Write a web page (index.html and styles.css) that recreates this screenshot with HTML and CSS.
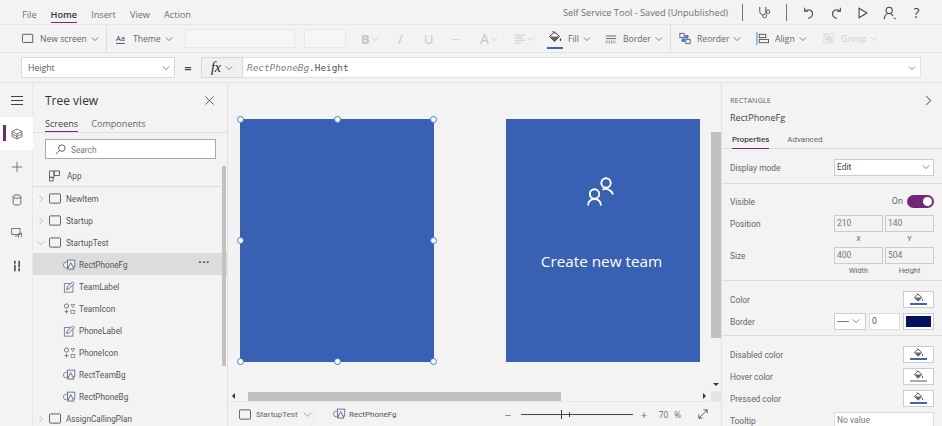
FILE: index.html
```html
<!DOCTYPE html>
<html lang="en">
<head>
<meta charset="utf-8">
<title>Self Service Tool</title>
<link rel="stylesheet" href="styles.css">
</head>
<body>
<svg class="defs" width="0" height="0" aria-hidden="true">
  <defs>
    <symbol id="chev" viewBox="0 0 10 10"><path d="M1 3l4 4 4-4" fill="none" stroke="currentColor" stroke-width="1"/></symbol>
    <symbol id="chevr" viewBox="0 0 10 10"><path d="M3 1l4 4-4 4" fill="none" stroke="currentColor" stroke-width="1"/></symbol>
    <symbol id="screen" viewBox="0 0 13 11"><rect x=".5" y=".5" width="12" height="10" rx="1" fill="none" stroke="#555" stroke-width="1"/></symbol>
    <symbol id="rect" viewBox="0 0 16 14"><circle cx="4" cy="7" r="3.500" fill="#f3f3f3" stroke="#777"/><rect x="5.500" y="1" width="9" height="8.500" fill="#f3f3f3" stroke="#3a66b5"/><path d="M9.500 4l4 8h-8z" fill="#f3f3f3" stroke="#555"/></symbol>
    <symbol id="label" viewBox="0 0 14 14"><rect x="1" y="3" width="10" height="10" fill="none" stroke="#777"/><path d="M3.500 10l1-3 6-6 2 2-6 6z" fill="#f3f3f3" stroke="#3a66b5"/></symbol>
    <symbol id="icons" viewBox="0 0 16 16"><circle cx="4" cy="4" r="2.800" fill="none" stroke="#555"/><path d="M10 2h5l-2.500 4z" fill="none" stroke="#777"/><path d="M4 9v5M1.500 11.500h5" stroke="#555" fill="none"/><rect x="10" y="10" width="5" height="4" fill="none" stroke="#777"/></symbol>
    <symbol id="bucket" viewBox="0 0 14 12"><path d="M6.500 1.500l5 4.500-5 5-5-5z" fill="#fff" stroke="#333"/><path d="M1.500 6h10l-5 5z" fill="#666"/><path d="M4.500 .5l2.500 2.500" stroke="#333"/><path d="M12.500 7.500c1 1.500 1 3 0 3s-1-1.500 0-3z" fill="#333"/></symbol>
  </defs>
</svg>
<div class="app">
  <header class="tabs">
    <nav class="tablist">
      <span class="tab">File</span>
      <span class="tab tab-on">Home</span>
      <span class="tab">Insert</span>
      <span class="tab">View</span>
      <span class="tab">Action</span>
    </nav>
    <div class="titlebar">
      <span class="doc">Self Service Tool - Saved (Unpublished)</span>
      <i class="vsep vsep-a"></i>
      <svg class="tico steth" viewBox="0 0 16 16"><path d="M2 1v5c0 3 2 4 3.500 4S9 9 9 6V1M5.500 10v2c0 2 4 2 4 0V9" fill="none" stroke="currentColor"/><circle cx="11.500" cy="6.500" r="2" fill="none" stroke="currentColor"/></svg>
      <i class="vsep vsep-b"></i>
      <svg class="tico undo" viewBox="0 0 16 16"><path d="M3 2v4h4M3 6c3-3 9-2 9 3 0 3-3 5-5 5" fill="none" stroke="currentColor" stroke-width="1.200"/></svg>
      <svg class="tico redo" viewBox="0 0 16 16"><path d="M13 2v4H9M13 6c-3-3-9-2-9 3 0 3 3 5 5 5" fill="none" stroke="currentColor" stroke-width="1.200"/></svg>
      <svg class="tico play" viewBox="0 0 16 16"><path d="M3.500 2.500l9 5.500-9 5.500z" fill="none" stroke="currentColor" stroke-width="1.200"/></svg>
      <svg class="tico user" viewBox="0 0 16 16"><circle cx="7" cy="5" r="3.500" fill="none" stroke="currentColor" stroke-width="1.200"/><path d="M1.500 15c0-4 2.500-6.500 5.500-6.500 2 0 3.500 1 4.500 3M12.500 13.500l2 1.500" fill="none" stroke="currentColor" stroke-width="1.200"/></svg>
      <span class="help">?</span>
    </div>
  </header>

  <div class="toolbar">
    <div class="tool tool-new">
      <svg class="tbi" viewBox="0 0 14 12"><rect x=".5" y=".5" width="12" height="9.500" rx="1" fill="none" stroke="#444"/><path d="M10 10h3" stroke="#3a66b5"/></svg>
      <span>New screen</span><svg class="cv"><use href="#chev"/></svg>
    </div>
    <i class="tsep"></i>
    <div class="tool tool-theme">
      <span class="aa">Aa</span><span>Theme</span><svg class="cv"><use href="#chev"/></svg>
    </div>
    <div class="ghost ghost-font"></div>
    <div class="ghost ghost-size"></div>
    <div class="dis dis-b">B<svg class="cv"><use href="#chev"/></svg></div>
    <div class="dis dis-i">/</div>
    <div class="dis dis-u">U</div>
    <div class="dis dis-s">&#8212;</div>
    <div class="dis dis-a">A<svg class="cv"><use href="#chev"/></svg></div>
    <div class="dis dis-al">
      <svg class="tbi" viewBox="0 0 14 12"><path d="M1 1.500h12M1 4.500h9M1 7.500h12M1 10.500h7" stroke="#c4c4c4"/></svg>
      <svg class="cv"><use href="#chev"/></svg>
    </div>
    <div class="tool tool-fill">
      <span class="fillbox"><svg class="fillicon"><use href="#bucket"/></svg><i class="fillbar"></i></span>
      <span>Fill</span><svg class="cv"><use href="#chev"/></svg>
    </div>
    <div class="tool tool-border">
      <svg class="tbi" viewBox="0 0 14 12"><path d="M1 2.500h12M1 5.500h12" stroke="#555"/><path d="M1 8.500h12M1 10.500h12" stroke="#555" stroke-dasharray="1 1"/></svg>
      <span>Border</span><svg class="cv"><use href="#chev"/></svg>
    </div>
    <i class="tsep"></i>
    <div class="tool tool-reorder">
      <svg class="tbi" viewBox="0 0 14 14"><rect x="1" y="1" width="5" height="5" fill="none" stroke="#555"/><rect x="7" y="3" width="4" height="4" fill="#3a7fd5"/><rect x="8" y="8" width="5" height="5" fill="none" stroke="#555"/><rect x="3" y="7" width="4" height="4" fill="#3a7fd5"/></svg>
      <span>Reorder</span><svg class="cv"><use href="#chev"/></svg>
    </div>
    <div class="tool tool-align">
      <svg class="tbi" viewBox="0 0 14 14"><path d="M1 0v14" stroke="#3a7fd5"/><rect x="3.500" y="2.500" width="7" height="3.500" fill="none" stroke="#555"/><rect x="3.500" y="8" width="10" height="3.500" fill="none" stroke="#555"/></svg>
      <span>Align</span><svg class="cv"><use href="#chev"/></svg>
    </div>
    <div class="tool tool-group">
      <svg class="tbi" viewBox="0 0 14 14"><rect x="1" y="1" width="12" height="12" fill="none" stroke="#ccc" stroke-dasharray="2 1"/><rect x="3.500" y="3.500" width="5" height="5" fill="none" stroke="#ccc"/><rect x="6" y="6" width="5" height="5" fill="none" stroke="#ccc"/></svg>
      <span>Group</span><svg class="cv"><use href="#chev"/></svg>
    </div>
  </div>

  <div class="formula">
    <div class="prop">Height<svg class="cv"><use href="#chev"/></svg></div>
    <span class="eq">=</span>
    <div class="fx"><em>fx</em><svg class="cv"><use href="#chev"/></svg></div>
    <div class="fxinput"><code><em>RectPhoneBg</em>.Height</code><svg class="cv"><use href="#chev"/></svg></div>
  </div>

  <main class="main">
    <aside class="rail">
      <svg class="rico burger" viewBox="0 0 12 9"><path d="M0 .5h12M0 4.500h12M0 8.500h12" stroke="#444"/></svg>
      <div class="rail-on">
        <svg class="rico" viewBox="0 0 12 12"><path d="M6 1l5 2.500v5L6 11 1 8.500v-5zM1 3.500L6 6l5-2.500M6 6v5M1 6l5 2.500L11 6" fill="none" stroke="#555" stroke-width=".8"/></svg>
      </div>
      <svg class="rico" viewBox="0 0 16 16"><path d="M8 1v14M1 8h14" stroke="#555"/></svg>
      <svg class="rico" viewBox="0 0 12 14"><ellipse cx="6" cy="3" rx="4.500" ry="2" fill="none" stroke="#555"/><path d="M1.500 3v8c0 2.500 9 2.500 9 0V3" fill="none" stroke="#555"/></svg>
      <svg class="rico" viewBox="0 0 16 14"><rect x="1" y="1" width="11" height="8" fill="none" stroke="#555"/><path d="M5 11h4M10 13V8l4-1v5" fill="none" stroke="#555"/></svg>
      <svg class="rico" viewBox="0 0 10 14"><path d="M2.500 1v12M7.500 1v12" stroke="#555" stroke-width="2"/><path d="M1 5h3M6 9h3" stroke="#f3f3f3"/></svg>
    </aside>

    <section class="tree">
      <div class="tree-head"><h2>Tree view</h2><svg class="close" viewBox="0 0 10 10"><path d="M.5.5l9 9M9.500.5l-9 9" stroke="#555"/></svg></div>
      <div class="tree-tabs"><span class="ttab ttab-on">Screens</span><span class="ttab">Components</span></div>
      <div class="search">
        <svg class="sico" viewBox="0 0 12 12"><circle cx="7.500" cy="4.500" r="3.500" fill="none" stroke="#555"/><path d="M5 7l-4 4" stroke="#555"/></svg>
        <span>Search</span>
      </div>
      <div class="tree-body">
        <div class="tree-list">
          <div class="row row-app"><svg class="ri ri-app" viewBox="0 0 12 12"><path d="M.5.500h5v7h-5zM5.500.500h6v5h-6zM.5 7.500h4v4h-4z" fill="none" stroke="#555"/></svg>App</div>
          <div class="row"><svg class="tw"><use href="#chevr"/></svg><svg class="ri"><use href="#screen"/></svg>NewItem</div>
          <div class="row"><svg class="tw"><use href="#chevr"/></svg><svg class="ri"><use href="#screen"/></svg>Startup</div>
          <div class="row"><svg class="tw"><use href="#chev"/></svg><svg class="ri"><use href="#screen"/></svg>StartupTest</div>
          <div class="row row-child row-sel"><svg class="ci"><use href="#rect"/></svg>RectPhoneFg<span class="dots">&#183;&#183;&#183;</span></div>
          <div class="row row-child"><svg class="ci"><use href="#label"/></svg>TeamLabel</div>
          <div class="row row-child"><svg class="ci"><use href="#icons"/></svg>TeamIcon</div>
          <div class="row row-child"><svg class="ci"><use href="#label"/></svg>PhoneLabel</div>
          <div class="row row-child"><svg class="ci"><use href="#icons"/></svg>PhoneIcon</div>
          <div class="row row-child"><svg class="ci"><use href="#rect"/></svg>RectTeamBg</div>
          <div class="row row-child"><svg class="ci"><use href="#rect"/></svg>RectPhoneBg</div>
          <div class="row"><svg class="tw"><use href="#chevr"/></svg><svg class="ri"><use href="#screen"/></svg>AssignCallingPlan</div>
        </div>
        <div class="tree-scroll"><i></i></div>
      </div>
    </section>

    <section class="work">
      <div class="canvas-wrap">
        <div class="canvas">
          <div class="phone phone-a">
            <i class="h tl"></i><i class="h tc"></i><i class="h tr"></i>
            <i class="h ml"></i><i class="h mr"></i>
            <i class="h bl"></i><i class="h bc"></i><i class="h br"></i>
          </div>
          <div class="phone phone-b">
            <svg class="team" viewBox="0 0 27 30"><g fill="none" stroke="#fff" stroke-width="1.900"><circle cx="19" cy="6" r="4.700"/><path d="M15.500 12.500c4-1.500 9 0 10.500 5"/><circle cx="7.500" cy="17" r="4.700"/><path d="M1 28.500c0-4 3-6.500 6.500-6.500s6.500 2.500 6.500 6.500"/></g></svg>
            <span class="create">Create new team</span>
          </div>
        </div>
        <div class="vscroll"><i class="up"></i><b></b><i class="down"></i></div>
      </div>
      <div class="hscroll"><i class="left"></i><span class="htrack"><b></b></span><i class="right"></i><i class="corner"></i></div>
      <footer class="status">
        <div class="crumb crumb-a"><svg class="ri"><use href="#screen"/></svg>StartupTest<svg class="cv"><use href="#chev"/></svg></div>
        <div class="crumb crumb-b"><svg class="ci"><use href="#rect"/></svg>RectPhoneFg</div>
        <div class="zoom">
          <span class="zm">&#8722;</span>
          <span class="slider"><i class="knob"></i><i class="tick"></i></span>
          <span class="zm">+</span>
          <span class="pct">70</span><span class="pct">%</span>
          <svg class="expand" viewBox="0 0 12 12"><path d="M1 11L11 1M6.500 1H11v4.500M1 6.500V11h4.500" fill="none" stroke="#444"/></svg>
        </div>
      </footer>
    </section>

    <aside class="props">
      <div class="p-head">
        <div class="p-kind"><span>RECTANGLE</span><svg class="p-next"><use href="#chevr"/></svg></div>
        <div class="p-name">RectPhoneFg</div>
        <div class="p-tabs"><span class="ptab ptab-on">Properties</span><span class="ptab">Advanced</span></div>
      </div>
      <div class="p-sec p-sec-a">
        <div class="p-row"><label>Display mode</label><div class="p-select">Edit<svg class="cv"><use href="#chev"/></svg></div></div>
      </div>
      <div class="p-sec p-sec-b">
        <div class="p-row p-vis"><label>Visible</label><div class="toggle-wrap"><span>On</span><span class="toggle"><i></i></span></div></div>
        <div class="p-row p-pair"><label>Position</label><div class="pair"><span class="num">210</span><span class="num">140</span></div></div>
        <div class="caps"><span>X</span><span>Y</span></div>
        <div class="p-row p-pair"><label>Size</label><div class="pair"><span class="num">400</span><span class="num">504</span></div></div>
        <div class="caps"><span>Width</span><span>Height</span></div>
      </div>
      <div class="p-sec p-sec-c">
        <div class="p-row"><label>Color</label><span class="swatch"><svg><use href="#bucket"/></svg><i></i></span></div>
        <div class="p-row"><label>Border</label>
          <div class="border-tools">
            <span class="bstyle"><i></i><svg class="cv"><use href="#chev"/></svg></span>
            <span class="bwidth">0</span>
            <span class="bcolor"><i></i></span>
          </div>
        </div>
      </div>
      <div class="p-sec p-sec-d">
        <div class="p-row"><label>Disabled color</label><span class="swatch"><svg><use href="#bucket"/></svg><i></i></span></div>
        <div class="p-row"><label>Hover color</label><span class="swatch swatch-grey"><svg><use href="#bucket"/></svg><i></i></span></div>
        <div class="p-row"><label>Pressed color</label><span class="swatch"><svg><use href="#bucket"/></svg><i></i></span></div>
        <div class="p-row"><label>Tooltip</label><div class="p-input">No value</div></div>
      </div>
    </aside>
  </main>
</div>
</body>
</html>
```
FILE: styles.css
```css
* { box-sizing: border-box; }
html, body { margin: 0; height: 100%; overflow: hidden; }
body { font-family: "Open Sans", "Noto Sans", sans-serif; font-size: 9px; color: #605e5c; background: #f3f3f3; }
.defs { position: absolute; }
.app { width: 942px; height: 426px; display: flex; flex-direction: column; overflow: hidden; }
i { display: block; }
.cv { width: 8px; height: 8px; color: #666; flex: none; margin-left: 4px; }

/* tabs */
.tabs { height: 25px; flex: none; display: flex; justify-content: space-between; border-bottom: 1px solid #e6e6e6; }
.tablist { display: flex; gap: 14px; padding-left: 22px; font-size: 9.200px; }
.tab { height: 24px; line-height: 29px; color: #707070; }
.tab-on { color: #333; font-weight: 600; border-bottom: 1px solid #742774; line-height: 29px; height: 23px; }
.titlebar { display: flex; align-items: center; height: 25px; padding-right: 21px; color: #444; }
.doc { font-size: 9.200px; color: #707070; margin-right: 14px; }
.vsep { width: 1px; height: 17px; background: #777; flex: none; }
.vsep-a { margin-right: 15px; }
.vsep-b { margin: 0 15px 0 14px; }
.tico { width: 14px; height: 14px; flex: none; }
.undo, .redo, .play { margin-right: 13px; }
.user { margin-right: 15px; }
.help { font-size: 14px; color: #444; width: 9px; text-align: center; }

/* toolbar */
.toolbar { height: 28px; flex: none; display: flex; align-items: center; padding-left: 22px; border-bottom: 1px solid #e2e2e2; }
.tool { display: flex; align-items: center; font-size: 8.600px; color: #666; flex: none; }
.tbi { width: 12px; height: 12px; flex: none; margin-right: 6px; }
.tool-new { width: 84px; }
.tsep { width: 1px; height: 28px; background: #dedede; flex: none; }
.tool-theme { margin-left: 9px; width: 69px; }
.aa { font-size: 7.500px; color: #333; border-bottom: 1px solid #3a66b5; line-height: 9px; margin-right: 8px; width: 9px; }
.ghost { height: 19px; border: 1px solid #e8e8e8; background: #f6f6f6; flex: none; }
.ghost-font { width: 110px; }
.ghost-size { width: 42px; margin-left: 9px; }
.dis { display: flex; align-items: center; color: #c6c6c6; font-size: 13px; flex: none; }
.dis .cv { color: #ccc; margin-left: 1px; }
.dis .tbi { margin: 0; }
.dis-b { margin-left: 15px; font-weight: 700; width: 37px; }
.dis-i { width: 26px; }
.dis-u { width: 27px; }
.dis-s { width: 29px; font-size: 9px; }
.dis-a { width: 34px; font-size: 14px; }
.dis-al { width: 33px; }
.tool-fill { width: 58px; }
.fillbox { width: 16px; height: 20px; margin-right: 5px; display: flex; flex-direction: column; align-items: center; justify-content: space-between; }
.fillicon { width: 14px; height: 13px; margin-top: 1px; }
.fillbar { width: 16px; height: 2px; background: #3a66b5; }
.tool-border { width: 65px; }
.tool-reorder { margin-left: 8px; width: 77px; }
.tool-reorder .tbi { height: 13px; }
.tool-align { width: 67px; }
.tool-align .tbi { margin-right: 6px; width: 13px; height: 13px; }
.tool-group { color: #cfcfcf; }
.tool-group .tbi { width: 11px; height: 11px; margin-right: 7px; }
.tool-group .cv { color: #ccc; }

/* formula */
.formula { height: 30px; flex: none; display: flex; align-items: center; padding-left: 21px; border-bottom: 1px solid #e2e2e2; }
.prop { width: 154px; height: 21px; background: #fff; border: 1px solid #d9d9d9; display: flex; align-items: center; justify-content: space-between; padding: 0 4px 0 6px; color: #555; font-size: 8.700px; }
.eq { width: 26px; text-align: center; font-size: 13px; font-weight: 600; color: #444; }
.fx { width: 42px; height: 21px; border: 1px solid #d9d9d9; background: #f0f0f0; display: flex; align-items: center; justify-content: center; }
.fx em { font-family: "Liberation Serif", serif; font-size: 14px; color: #222; }
.fxinput { width: 678px; height: 21px; background: #fff; border: 1px solid #e2e2e2; border-left: 0; display: flex; align-items: center; justify-content: space-between; padding: 0 4px; }
.fxinput code { font-family: "DejaVu Sans Mono", "Liberation Mono", monospace; font-size: 9.400px; color: #555; }
.fxinput em { color: #808080; }

/* main */
.main { flex: 1; display: flex; min-height: 0; }
.rail { width: 33px; flex: none; display: flex; flex-direction: column; align-items: center; border-right: 1px solid #e6e6e6; padding: 1px 0 0 2px; }
.rico { width: 12px; height: 12px; flex: none; margin: 10.500px 0; }
.burger { height: 9px; margin: 12px 0; }
.rail-on { width: 33px; height: 33px; background: #fff; display: flex; align-items: center; justify-content: center; border-left: 3px solid transparent; padding-right: 2px; position: relative; flex: none; align-self: flex-start; margin-left: -2px; }
.rail-on::before { content: ""; position: absolute; left: 0; top: 8px; width: 3px; height: 16px; background: #742774; }

/* tree */
.tree { width: 195px; flex: none; display: flex; flex-direction: column; border-right: 1px solid #e2e2e2; }
.tree-head { height: 34px; display: flex; align-items: center; justify-content: space-between; padding: 0 13px 0 12px; flex: none; }
.tree-head h2 { margin: 0; font-size: 12px; font-weight: 400; color: #333; }
.close { width: 9px; height: 9px; }
.tree-tabs { height: 15px; display: flex; gap: 13px; padding-left: 12px; border-bottom: 1px solid #e0e0e0; font-size: 9.100px; flex: none; box-sizing: content-box; }
.ttab { color: #666; height: 15px; line-height: 13px; }
.ttab-on { color: #444; border-bottom: 1px solid #742774; }
.search { margin: 6px 12px; height: 20px; width: 171px; background: #fff; border: 1px solid #aaa; display: flex; align-items: center; padding: 1px 0 0 9px; gap: 5px; flex: none; font-family: Roboto, sans-serif; font-size: 8.300px; color: #777; }
.sico { width: 11px; height: 11px; }
.tree-body { flex: 1; display: flex; min-height: 0; overflow: hidden; }
.tree-list { flex: 1; min-width: 0; }
.row { height: 22px; display: flex; align-items: center; padding: 1px 0 0 4px; font-family: Roboto, sans-serif; font-size: 8.200px; color: #555; white-space: nowrap; }
.row-app { padding: 1px 0 0 16px; border-bottom: 1px solid #ddd; }
.tw { width: 8px; height: 8px; color: #aaa; flex: none; margin-right: 4px; }
.ri { width: 12px; height: 11px; flex: none; margin-right: 5px; }
.ri-app { width: 11px; height: 12px; margin-right: 7px; }
.row-child { padding-left: 30px; position: relative; }
.ci { width: 13px; height: 12px; flex: none; margin-right: 3px; }
.row-sel { background: #dcdcdc; margin-right: -6px; }
.dots { position: absolute; left: 165px; top: 2px; font-size: 13px; line-height: 14px; font-weight: 700; color: #555; }
.tree-scroll { width: 6px; flex: none; position: relative; }
.tree-scroll i { position: absolute; top: 1px; width: 4px; height: 200px; background: #c2c2c2; left: 1px; }

/* work area */
.work { flex: 1; min-width: 0; display: flex; flex-direction: column; border-right: 1px solid #e2e2e2; }
.canvas-wrap { flex: 1; display: flex; min-height: 0; }
.canvas { flex: 1; position: relative; }
.phone { position: absolute; top: 36px; width: 194px; height: 243px; background: #3861b3; }
.phone-a { left: 12px; }
.phone-b { left: 278px; display: flex; flex-direction: column; align-items: center; }
.h { position: absolute; width: 7px; height: 7px; border-radius: 50%; background: #fff; border: 1px solid #3a7fd5; }
.tl { left: -3px; top: -3px; } .tc { left: 94px; top: -3px; } .tr { right: -3px; top: -3px; }
.ml { left: -3px; top: 118px; } .mr { right: -3px; top: 118px; }
.bl { left: -3px; bottom: -3px; } .bc { left: 94px; bottom: -3px; } .br { right: -3px; bottom: -3px; }
.team { width: 27px; height: 30px; margin: 58px 5px 0 0; flex: none; }
.create { margin: 44px 3px 0 0; color: #fff; font-size: 15.300px; line-height: 20px; }
.vscroll { width: 10px; flex: none; display: flex; flex-direction: column; padding-top: 49px; padding-bottom: 2px; }
.vscroll b { display: block; height: 206px; background: #c0c0c0; }
.vscroll .up { display: none; }
.vscroll .down { width: 0; height: 0; border: 3px solid transparent; border-top: 3px solid #333; margin: auto auto 0; }
.hscroll { height: 10px; flex: none; display: flex; align-items: center; padding: 0 0 0 1px; }
.hscroll .left { width: 6px; height: 6px; border: 3px solid transparent; border-right: 3px solid #333; flex: none; }
.hscroll .right { width: 6px; height: 6px; border: 3px solid transparent; border-left: 3px solid #333; flex: none; margin-right: 2px; }
.hscroll .corner { width: 10px; height: 10px; background: #e4e4e4; flex: none; }
.htrack { flex: 1; height: 9px; padding-left: 13px; }
.htrack b { display: block; width: 313px; height: 9px; background: #c0c0c0; }
.status { height: 25px; flex: none; display: flex; align-items: center; border-top: 1px solid #e8e8e8; }
.crumb { display: flex; align-items: center; font-family: Roboto, sans-serif; font-size: 8px; color: #666; position: relative; }
.crumb-a { padding-left: 11px; width: 105px; height: 24px; }
.crumb-a .cv { margin-left: 5px; color: #999; width: 9px; height: 9px; }
.crumb-a::after { content: ""; position: absolute; right: 13px; top: 3px; width: 17px; height: 17px; border-top: 1px solid #e2e2e2; border-right: 1px solid #e2e2e2; transform: scaleX(.35) rotate(45deg); }
.crumb-b { color: #555; }
.zoom { display: flex; align-items: center; margin-left: auto; padding-right: 13px; color: #666; }
.zm { font-size: 11px; width: 12px; text-align: center; }
.slider { width: 112px; height: 1px; background: #444; position: relative; margin: 0 5px 0 7px; }
.knob { position: absolute; left: 40px; top: -4px; width: 1px; height: 9px; background: #333; }
.tick { position: absolute; left: 48px; top: -2px; width: 1px; height: 5px; background: #444; }
.pct { font-size: 8.200px; margin-left: 9px; }
.pct + .pct { margin-left: 6px; }
.expand { width: 10px; height: 10px; margin-left: 17px; }

/* props */
.props { width: 220px; flex: none; display: flex; flex-direction: column; overflow: hidden; }
.p-head { height: 66px; padding: 11px 8px 0 8px; border-bottom: 1px solid #ddd; flex: none; }
.p-kind { display: flex; justify-content: space-between; align-items: center; font-size: 7.400px; color: #666; height: 12px; }
.p-next { width: 11px; height: 11px; color: #777; }
.p-name { font-size: 9.100px; color: #444; margin-top: 5px; line-height: 13px; }
.p-tabs { display: flex; gap: 18px; font-family: Roboto, sans-serif; font-size: 8px; margin-top: 10px; padding-left: 2px; }
.ptab { color: #666; height: 15px; line-height: 11px; }
.ptab-on { color: #444; font-weight: 500; border-bottom: 1px solid #742774; height: 15px; }
.p-sec { padding: 0 8px; border-bottom: 1px solid #ddd; flex: none; display: flex; flex-direction: column; }
.p-row { display: flex; align-items: center; justify-content: space-between; font-family: Roboto, sans-serif; font-size: 8.400px; color: #666; flex: none; height: 22px; }
.p-row label { padding-top: 1px; }
.p-sec-a { height: 35px; justify-content: center; padding-top: 2px; }
.p-select { width: 100px; height: 17px; background: #fff; border: 1px solid #ccc; display: flex; align-items: center; justify-content: space-between; padding: 0 3px 0 2px; color: #444; font-size: 8.400px; }
.p-sec-b { height: 97px; padding-top: 6px; }
.p-vis { height: 22px; margin-bottom: 1px; }
.toggle-wrap { display: flex; align-items: center; gap: 4px; font-size: 9px; }
.toggle { width: 27px; height: 13px; border-radius: 7px; background: #742774; position: relative; }
.toggle i { position: absolute; right: 2px; top: 2px; width: 9px; height: 9px; background: #fff; border-radius: 50%; }
.p-pair { height: 17px; margin-top: 2px; }
.pair { display: flex; gap: 2px; }
.num { width: 49px; height: 17px; border: 1px solid #ccc; background: #f3f3f3; padding-left: 2px; line-height: 15px; color: #777; font-size: 8.500px; }
.caps { display: flex; gap: 2px; justify-content: flex-end; height: 13px; font-family: Roboto, sans-serif; font-size: 7.400px; color: #666; line-height: 13px; }
.caps span { width: 49px; text-align: center; }
.p-sec-c { height: 55px; padding-top: 7px; }
.swatch { width: 31px; height: 17px; background: #fff; border: 1px solid #ccc; display: flex; flex-direction: column; align-items: center; justify-content: space-between; padding: 1px 6px 2px; }
.swatch svg { width: 11px; height: 9px; }
.swatch i { width: 100%; height: 2px; background: #3a66b5; }
.swatch-grey i { background: #a9a9a9; }
.border-tools { display: flex; gap: 3px; }
.bstyle { width: 32px; height: 17px; background: #fff; border: 1px solid #ccc; display: flex; align-items: center; padding: 0 2px; }
.bstyle i { width: 12px; height: 1px; background: #777; }
.bstyle .cv { margin-left: 3px; }
.bwidth { width: 31px; height: 17px; background: #fff; border: 1px solid #ddd; padding-left: 2px; line-height: 15px; color: #555; font-size: 8.500px; }
.bcolor { width: 31px; height: 17px; background: #fff; border: 1px solid #ccc; padding: 2px; }
.bcolor i { width: 100%; height: 100%; background: #04115c; }
.p-sec-d { flex: 1; border-bottom: 0; padding-top: 7px; }
.p-input { width: 100px; height: 17px; background: #fff; border: 1px solid #ddd; padding-left: 2px; line-height: 15px; color: #777; font-size: 8.500px; }
```
